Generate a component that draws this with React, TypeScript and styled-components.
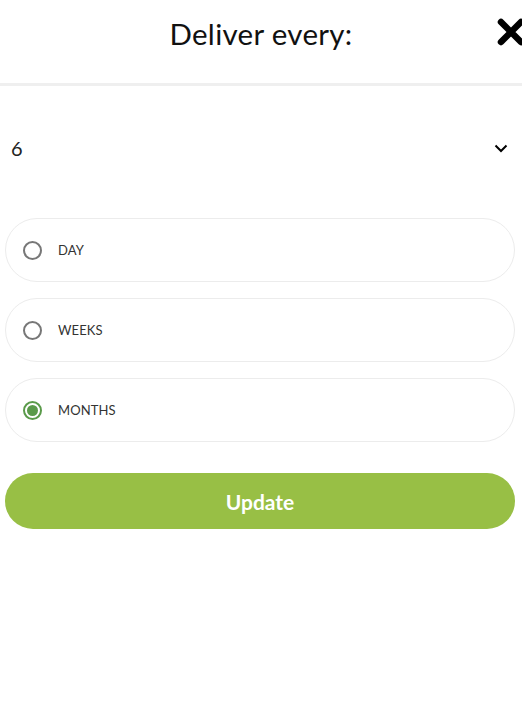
import React, { useState } from "react";
import styled, { createGlobalStyle } from "styled-components";

const GlobalStyle = createGlobalStyle`
    html, body {
        margin: 0;
        padding: 0;
        background: #fff;
        font-family: Lato, "Noto Sans", sans-serif;
        overflow: hidden;
    }
`;

const Modal = styled.div`
    width: 522px;
    height: 717px;
    background: #fff;
`;

const Header = styled.div`
    position: relative;
    height: 83px;
    border-bottom: 3px solid #efefef;
    display: flex;
    align-items: center;
    justify-content: center;
`;

const Title = styled.h1`
    margin: 0 0 16px;
    font-size: 29.5px;
    font-weight: 400;
    color: #111;
    letter-spacing: 0.3px;
`;

const CloseButton = styled.button`
    position: absolute;
    top: 17px;
    right: -4px;
    width: 30px;
    height: 30px;
    border: none;
    background: none;
    padding: 0;
    cursor: pointer;
`;

const Body = styled.div`
    padding: 0 7px 0 5px;
`;

const SelectRow = styled.div`
    display: flex;
    align-items: center;
    justify-content: space-between;
    height: 124px;
    margin-bottom: 8px;
    padding: 0 7px 0 6px;
    font-size: 20px;
    color: #222;
`;

const Options = styled.div`
    display: flex;
    flex-direction: column;
    gap: 16px;
`;

const OptionRow = styled.label`
    display: flex;
    align-items: center;
    gap: 16px;
    height: 62px;
    padding: 0 17px;
    border: 1px solid #ececec;
    border-radius: 32px;
    cursor: pointer;
`;

const Radio = styled.span<{ $checked: boolean }>`
    box-sizing: border-box;
    width: 19px;
    height: 19px;
    border-radius: 50%;
    border: 2px solid ${p => (p.$checked ? "#5a9a4a" : "#777")};
    display: flex;
    align-items: center;
    justify-content: center;
    &::after {
        content: "";
        width: 11px;
        height: 11px;
        border-radius: 50%;
        background: ${p => (p.$checked ? "#5a9a4a" : "transparent")};
    }
`;

const OptionLabel = styled.span`
    font-size: 13px;
    color: #333;
    text-transform: uppercase;
    letter-spacing: 0.1px;
`;

const UpdateButton = styled.button`
    display: block;
    width: 100%;
    height: 56px;
    margin-top: 31px;
    border: none;
    border-radius: 28px;
    background: #98bf45;
    color: #fff;
    font-family: Lato, "Noto Sans", sans-serif;
    font-weight: 700;
    font-size: 21px;
    cursor: pointer;
`;

const options = ["Day", "Weeks", "Months"];

export default function App() {
    const [selected, setSelected] = useState("Months");
    return (
        <Modal>
            <GlobalStyle />
            <Header>
                <Title>Deliver every:</Title>
                <CloseButton aria-label="Close">
                    <svg width="30" height="30" viewBox="0 0 30 30">
                        <path
                            d="M5 5 L25 25 M25 5 L5 25"
                            stroke="#000"
                            strokeWidth="6.5"
                            strokeLinecap="round"
                        />
                    </svg>
                </CloseButton>
            </Header>
            <Body>
                <SelectRow>
                    <span>6</span>
                    <svg width="14" height="9" viewBox="0 0 14 9">
                        <path d="M1.5 1.5 L7 7 L12.5 1.5" fill="none" stroke="#000" strokeWidth="2" />
                    </svg>
                </SelectRow>
                <Options>
                    {options.map(o => (
                        <OptionRow key={o} onClick={() => setSelected(o)}>
                            <Radio $checked={selected === o} />
                            <OptionLabel>{o}</OptionLabel>
                        </OptionRow>
                    ))}
                </Options>
                <UpdateButton>Update</UpdateButton>
            </Body>
        </Modal>
    );
}
